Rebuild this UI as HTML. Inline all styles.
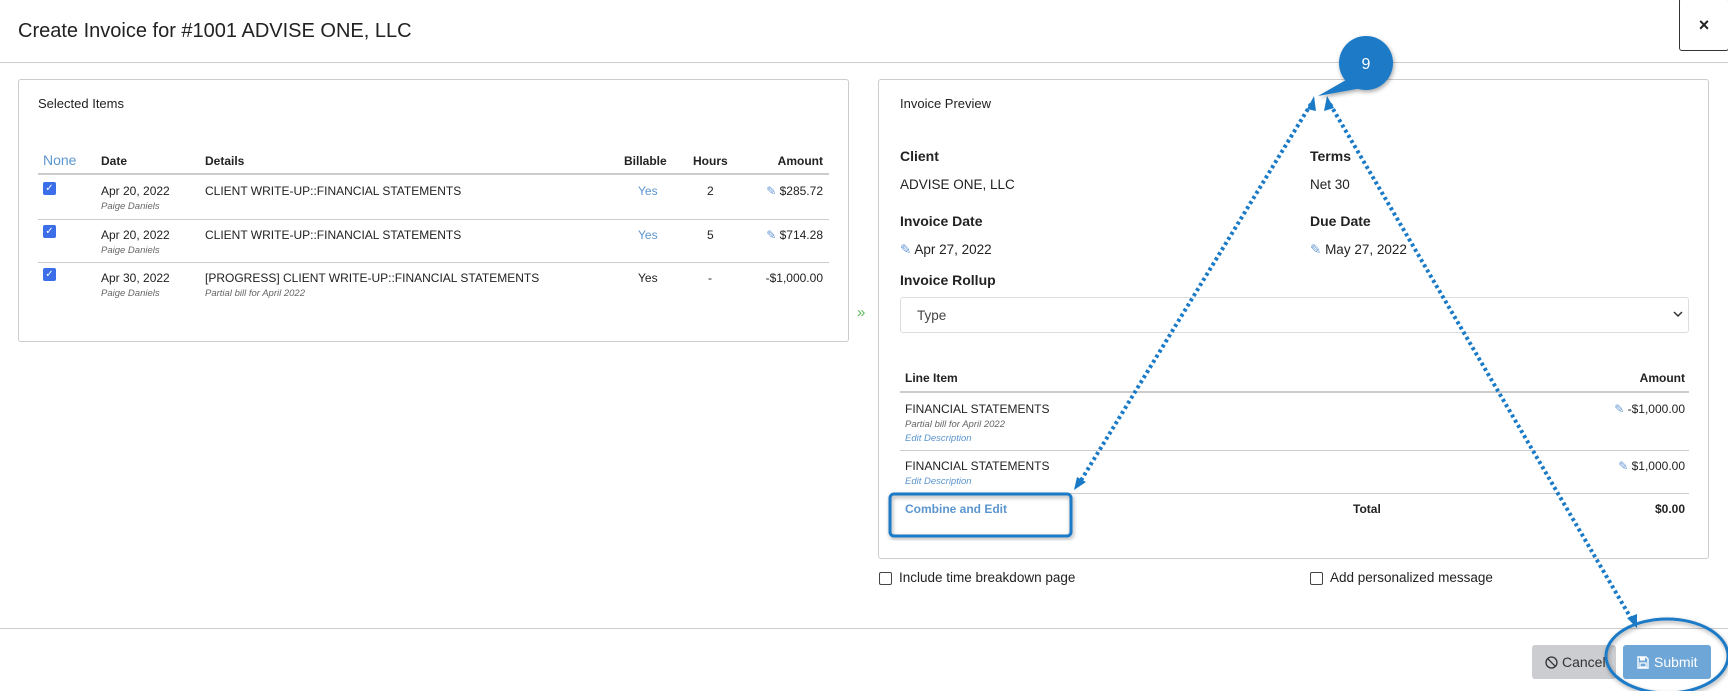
<!DOCTYPE html>
<html><head><meta charset="utf-8"><style>
*{box-sizing:border-box;margin:0;padding:0}
body{width:1728px;height:691px;overflow:hidden;background:#fff;font-family:"Liberation Sans",Arial,sans-serif;color:#222;position:relative;font-size:12px}
.a{position:absolute;white-space:nowrap}
.b{font-weight:bold}
.sub{font-size:9.5px;font-style:italic;color:#666}
.blue{color:#5b95cf}
.hl{position:absolute;height:1px;background:#ccc}
.cb{position:absolute;width:13px;height:13px;background:#3b6ee8;border-radius:2px;color:#fff;font-size:10px;line-height:13px;text-align:center}
.ecb{position:absolute;width:13px;height:13px;border:1px solid #444;border-radius:2px}
.r{text-align:right}
.ed{color:#6a9ad6}
</style></head><body>
<div class="a" style="left:18px;top:20px;font-size:20px;color:#222">Create Invoice for #1001 ADVISE ONE, LLC</div>
<div class="a" style="left:1679px;top:-2px;width:50px;height:53px;border:1px solid #333;border-radius:3px;text-align:center;line-height:53px;font-size:18px;font-weight:bold">×</div>
<div class="hl" style="left:0;top:62px;width:1728px"></div>

<div class="a" style="left:18px;top:79px;width:831px;height:263px;border:1px solid #ccc;border-radius:3px"></div>
<div class="a" style="left:38px;top:96px;font-size:13px">Selected Items</div>
<div class="a blue" style="left:43px;top:152px;font-size:14px">None</div>
<div class="a b" style="left:101px;top:154px">Date</div>
<div class="a b" style="left:205px;top:154px">Details</div>
<div class="a b" style="left:624px;top:154px">Billable</div>
<div class="a b" style="left:693px;top:154px">Hours</div>
<div class="a b r" style="left:763px;top:154px;width:60px">Amount</div>
<div class="hl" style="left:38px;top:173px;width:791px;height:2px"></div>
<div class="hl" style="left:38px;top:219px;width:791px"></div>
<div class="hl" style="left:38px;top:262px;width:791px"></div>

<div class="cb" style="left:43px;top:182px">✓</div>
<div class="a" style="left:101px;top:184px">Apr 20, 2022</div><div class="a sub" style="left:101px;top:201px">Paige Daniels</div>
<div class="a" style="left:205px;top:184px">CLIENT WRITE-UP::FINANCIAL STATEMENTS</div>
<div class="a blue" style="left:638px;top:184px">Yes</div><div class="a" style="left:707px;top:184px">2</div>
<div class="a r" style="left:723px;top:184px;width:100px"><span class="ed">✎</span> $285.72</div>

<div class="cb" style="left:43px;top:225px">✓</div>
<div class="a" style="left:101px;top:228px">Apr 20, 2022</div><div class="a sub" style="left:101px;top:245px">Paige Daniels</div>
<div class="a" style="left:205px;top:228px">CLIENT WRITE-UP::FINANCIAL STATEMENTS</div>
<div class="a blue" style="left:638px;top:228px">Yes</div><div class="a" style="left:707px;top:228px">5</div>
<div class="a r" style="left:723px;top:228px;width:100px"><span class="ed">✎</span> $714.28</div>

<div class="cb" style="left:43px;top:268px">✓</div>
<div class="a" style="left:101px;top:271px">Apr 30, 2022</div><div class="a sub" style="left:101px;top:288px">Paige Daniels</div>
<div class="a" style="left:205px;top:271px">[PROGRESS] CLIENT WRITE-UP::FINANCIAL STATEMENTS</div>
<div class="a sub" style="left:205px;top:288px">Partial bill for April 2022</div>
<div class="a" style="left:638px;top:271px">Yes</div><div class="a" style="left:708px;top:271px">-</div>
<div class="a r" style="left:723px;top:271px;width:100px">-$1,000.00</div>
<div class="a" style="left:857px;top:304px;color:#5cb85c;font-size:15px">»</div>

<div class="a" style="left:878px;top:79px;width:831px;height:480px;border:1px solid #ccc;border-radius:3px"></div>
<div class="a" style="left:900px;top:96px;font-size:13px">Invoice Preview</div>
<div class="a b" style="left:900px;top:148px;font-size:14px">Client</div>
<div class="a b" style="left:1310px;top:148px;font-size:14px">Terms</div>
<div class="a" style="left:900px;top:177px;font-size:13.5px">ADVISE ONE, LLC</div>
<div class="a" style="left:1310px;top:177px;font-size:13.5px">Net 30</div>
<div class="a b" style="left:900px;top:213px;font-size:14px">Invoice Date</div>
<div class="a b" style="left:1310px;top:213px;font-size:14px">Due Date</div>
<div class="a" style="left:900px;top:242px;font-size:13.5px"><span class="ed">✎</span> Apr 27, 2022</div>
<div class="a" style="left:1310px;top:242px;font-size:13.5px"><span class="ed">✎</span> May 27, 2022</div>
<div class="a b" style="left:900px;top:272px;font-size:14px">Invoice Rollup</div>
<div class="a" style="left:900px;top:297px;width:789px;height:36px;border:1px solid #ddd;border-radius:3px"></div>
<div class="a" style="left:917px;top:308px;font-size:13.5px;color:#444">Type</div>
<svg class="a" style="left:1673px;top:310px" width="10" height="8"><path d="M1,2 L5,6 L9,2" stroke="#333" stroke-width="1.5" fill="none"/></svg>

<div class="a b" style="left:905px;top:371px">Line Item</div>
<div class="a b r" style="left:1585px;top:371px;width:100px">Amount</div>
<div class="hl" style="left:900px;top:391px;width:789px;height:2px"></div>
<div class="a" style="left:905px;top:402px">FINANCIAL STATEMENTS</div>
<div class="a sub" style="left:905px;top:419px">Partial bill for April 2022</div>
<div class="a sub" style="left:905px;top:433px;color:#5b95cf">Edit Description</div>
<div class="a r" style="left:1560px;top:402px;width:125px"><span class="ed">✎</span> -$1,000.00</div>
<div class="hl" style="left:900px;top:450px;width:789px"></div>
<div class="a" style="left:905px;top:459px">FINANCIAL STATEMENTS</div>
<div class="a sub" style="left:905px;top:476px;color:#5b95cf">Edit Description</div>
<div class="a r" style="left:1560px;top:459px;width:125px"><span class="ed">✎</span> $1,000.00</div>
<div class="hl" style="left:900px;top:493px;width:789px"></div>
<div class="a b blue" style="left:905px;top:502px;font-size:12px">Combine and Edit</div>
<div class="a b" style="left:1353px;top:502px">Total</div>
<div class="a b r" style="left:1585px;top:502px;width:100px">$0.00</div>

<div class="ecb" style="left:879px;top:572px"></div>
<div class="a" style="left:899px;top:570px;font-size:13.5px">Include time breakdown page</div>
<div class="ecb" style="left:1310px;top:572px"></div>
<div class="a" style="left:1330px;top:570px;font-size:13.5px">Add personalized message</div>

<div class="hl" style="left:0;top:628px;width:1728px"></div>
<div class="a" style="left:1532px;top:645px;width:84px;height:34px;background:#cbcdd0;border-radius:3px;font-size:14px;color:#333;line-height:34px;padding-left:14px">
<svg style="position:absolute;left:13px;top:11px" width="13" height="13"><circle cx="6.5" cy="6.5" r="5.5" stroke="#333" stroke-width="1.3" fill="none"/><line x1="2.6" y1="2.6" x2="10.4" y2="10.4" stroke="#333" stroke-width="1.3"/></svg>
<span style="position:absolute;left:30px">Cancel</span></div>
<div class="a" style="left:1623px;top:645px;width:88px;height:34px;background:#6ea6d8;border-radius:3px;font-size:14px;color:#fff;line-height:34px">
<svg style="position:absolute;left:14px;top:11px" width="12" height="13"><path d="M1,1 H9 L11,3 V12 H1 Z" stroke="#fff" stroke-width="1.4" fill="none"/><rect x="3" y="1" width="5" height="3.5" fill="#fff"/><rect x="3" y="7" width="6" height="4" fill="none" stroke="#fff" stroke-width="1.2"/></svg>
<span style="position:absolute;left:31px">Submit</span></div>

<svg class="a" style="left:0;top:0" width="1728" height="691">
<defs><filter id="s"><feDropShadow dx="1" dy="2" stdDeviation="2" flood-opacity="0.35"/></filter></defs>
<g stroke="#1a7ac6" stroke-width="4" stroke-dasharray="3 3" fill="none">
<line x1="1311" y1="104" x2="1080" y2="482"/>
<line x1="1330" y1="104" x2="1632" y2="620"/>
</g>
<g fill="#1a7ac6">
<polygon points="1314,96 1307,109 1316,111"/>
<polygon points="1327,96 1324,111 1334,108"/>
<polygon points="1074,490 1077,477 1086,482"/>
<polygon points="1637,628 1627,618 1637,614"/>
</g>
<rect x="890" y="494" width="181" height="42" rx="4" fill="none" stroke="#1a7ac6" stroke-width="3" filter="url(#s)"/>
<ellipse cx="1667" cy="656" rx="61" ry="37" fill="none" stroke="#1a7ac6" stroke-width="3" filter="url(#s)"/>
<g filter="url(#s)"><path d="M1346,80 L1318,96 L1362,88 Z" fill="#1a7ac6"/><circle cx="1366" cy="63" r="27" fill="#1a7ac6"/></g>
<text x="1366" y="69" fill="#fff" font-size="16" font-family="Liberation Sans" text-anchor="middle">9</text>
</svg>
</body></html>
